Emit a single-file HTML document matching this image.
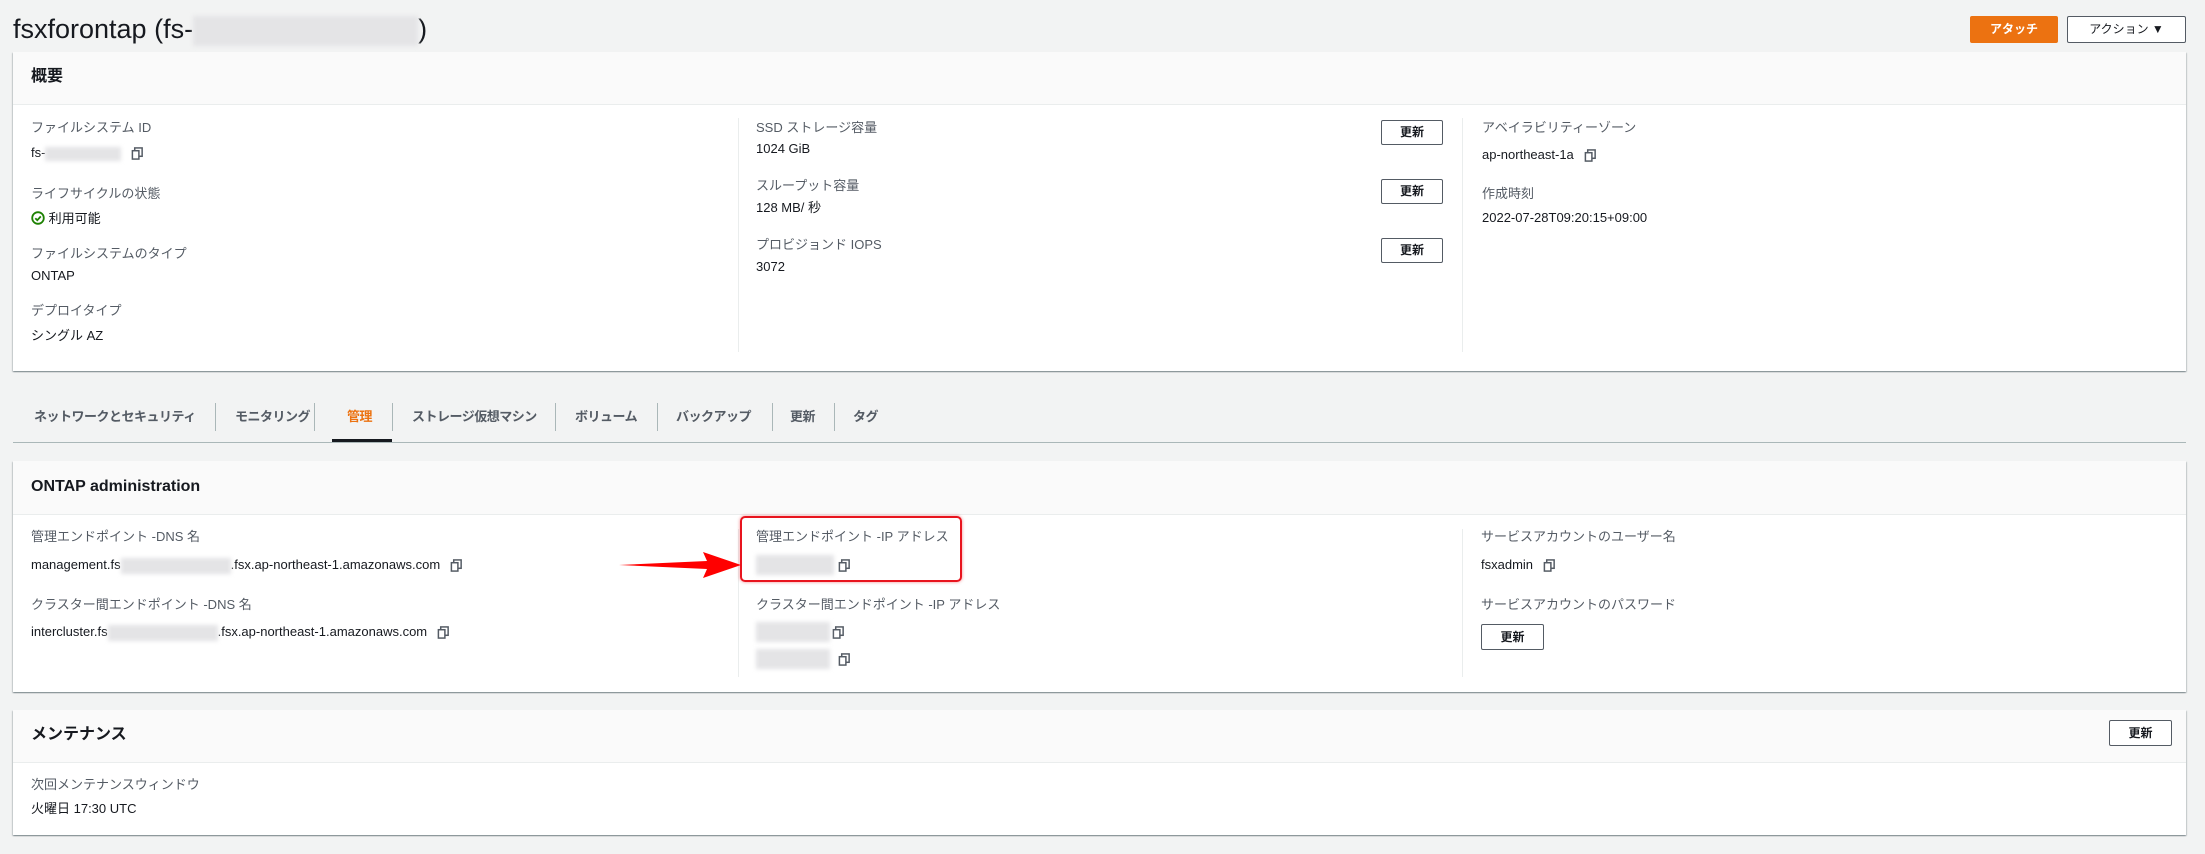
<!DOCTYPE html>
<html><head><meta charset="utf-8"><style>
*{margin:0;padding:0;box-sizing:border-box}
body{width:2205px;height:854px;background:#f2f3f3;font-family:"Liberation Sans","Noto Sans CJK JP",sans-serif;color:#16191f;position:relative;overflow:hidden;font-size:13px}
.a{position:absolute;white-space:nowrap;line-height:18px}
.lbl{color:#545b64}
.card{position:absolute;left:13px;width:2173px;background:#fff;box-shadow:0 1px 1px 0 rgba(0,28,36,.3),1px 1px 1px 0 rgba(0,28,36,.15),-1px 1px 1px 0 rgba(0,28,36,.15)}
.hd{position:absolute;left:0;top:0;width:100%;background:#fafafa;border-bottom:1px solid #eaeded}
.h{font-weight:bold;font-size:16px}
.btn{position:absolute;border:1px solid #545b64;background:#fff;font-size:12px;font-weight:bold;text-align:center;border-radius:2px;color:#545b64}
.vd{position:absolute;width:1px;background:#eaeded}
.blur{display:inline-block;background:#e4e4e6;filter:blur(2px);vertical-align:middle}
.cp{display:inline-block;vertical-align:middle;margin-left:10px}
.tab{position:absolute;top:408px;font-size:13px;font-weight:bold;color:#545b64;line-height:18px;letter-spacing:-0.5px}
.sep{position:absolute;top:403px;width:1px;height:28px;background:#aab7b8}
</style></head><body>
<svg width="0" height="0" style="position:absolute"><defs><symbol id="c" viewBox="0 0 14 14"><rect x="4" y="1" width="8" height="9" fill="none" stroke="#545b64" stroke-width="1.6"/><rect x="1.5" y="4" width="7" height="9" fill="#fff" stroke="#545b64" stroke-width="1.6"/></symbol></defs></svg>

<div class="a" style="left:13px;top:13px;font-size:27px;line-height:32px">fsxforontap (fs-<span class="blur" style="width:225px;height:30px"></span>)</div>
<div class="btn" style="left:1970px;top:16px;width:88px;height:27px;background:#ec7211;border-color:#ec7211;color:#fff;line-height:25px">アタッチ</div>
<div class="btn" style="left:2067px;top:16px;width:119px;height:27px;line-height:25px;font-weight:normal;color:#16191f">アクション ▼</div>

<div class="card" style="top:52px;height:319px">
 <div class="hd" style="height:53px"><div class="a h" style="left:18px;top:16px">概要</div></div>
 <div class="vd" style="left:725px;top:66px;height:234px"></div>
 <div class="vd" style="left:1449px;top:66px;height:234px"></div>
 <div class="a lbl" style="left:18px;top:67px">ファイルシステム ID</div>
 <div class="a" style="left:18px;top:92px">fs-<span class="blur" style="width:76px;height:14px"></span><svg class="cp" width="13" height="13"><use href="#c"/></svg></div>
 <div class="a lbl" style="left:18px;top:133px">ライフサイクルの状態</div>
 <div class="a" style="left:18px;top:158px"><svg width="14" height="14" style="vertical-align:-2px" viewBox="0 0 14 14"><circle cx="7" cy="7" r="5.8" fill="none" stroke="#1d8102" stroke-width="1.8"/><path d="M4.3 7.2l2 2 3.5-3.8" fill="none" stroke="#1d8102" stroke-width="1.8"/></svg> 利用可能</div>
 <div class="a lbl" style="left:18px;top:193px">ファイルシステムのタイプ</div>
 <div class="a" style="left:18px;top:215px">ONTAP</div>
 <div class="a lbl" style="left:18px;top:250px">デプロイタイプ</div>
 <div class="a" style="left:18px;top:275px">シングル AZ</div>

 <div class="a lbl" style="left:743px;top:67px">SSD ストレージ容量</div>
 <div class="a" style="left:743px;top:88px">1024 GiB</div>
 <div class="a lbl" style="left:743px;top:125px">スループット容量</div>
 <div class="a" style="left:743px;top:147px">128 MB/ 秒</div>
 <div class="a lbl" style="left:743px;top:184px">プロビジョンド IOPS</div>
 <div class="a" style="left:743px;top:206px">3072</div>
 <div class="btn" style="left:1368px;top:68px;width:62px;height:25px;line-height:23px;color:#16191f">更新</div>
 <div class="btn" style="left:1368px;top:127px;width:62px;height:25px;line-height:23px;color:#16191f">更新</div>
 <div class="btn" style="left:1368px;top:186px;width:62px;height:25px;line-height:23px;color:#16191f">更新</div>

 <div class="a lbl" style="left:1469px;top:67px">アベイラビリティーゾーン</div>
 <div class="a" style="left:1469px;top:94px">ap-northeast-1a<svg class="cp" width="13" height="13"><use href="#c"/></svg></div>
 <div class="a lbl" style="left:1469px;top:133px">作成時刻</div>
 <div class="a" style="left:1469px;top:157px">2022-07-28T09:20:15+09:00</div>
</div>

<div class="tab" style="left:34px">ネットワークとセキュリティ</div>
<div class="sep" style="left:215px"></div>
<div class="tab" style="left:235px">モニタリング</div>
<div class="sep" style="left:314px"></div>
<div class="tab" style="left:347px;color:#ec7211">管理</div>
<div style="position:absolute;left:332px;top:439px;width:60px;height:3px;background:#16191f"></div>
<div class="sep" style="left:392px"></div>
<div class="tab" style="left:412px">ストレージ仮想マシン</div>
<div class="sep" style="left:555px"></div>
<div class="tab" style="left:575px">ボリューム</div>
<div class="sep" style="left:657px"></div>
<div class="tab" style="left:676px">バックアップ</div>
<div class="sep" style="left:772px"></div>
<div class="tab" style="left:790px">更新</div>
<div class="sep" style="left:834px"></div>
<div class="tab" style="left:853px">タグ</div>
<div style="position:absolute;left:13px;top:442px;width:2173px;height:1px;background:#aab7b8"></div>

<div class="card" style="top:461px;height:231px">
 <div class="hd" style="height:54px"><div class="a h" style="left:18px;top:17px">ONTAP administration</div></div>
 <div class="vd" style="left:725px;top:68px;height:148px"></div>
 <div class="vd" style="left:1449px;top:68px;height:148px"></div>
 <div class="a lbl" style="left:18px;top:67px">管理エンドポイント -DNS 名</div>
 <div class="a" style="left:18px;top:95px">management.fs<span class="blur" style="width:110px;height:16px"></span>.fsx.ap-northeast-1.amazonaws.com<svg class="cp" width="13" height="13"><use href="#c"/></svg></div>
 <div class="a lbl" style="left:18px;top:135px">クラスター間エンドポイント -DNS 名</div>
 <div class="a" style="left:18px;top:162px">intercluster.fs<span class="blur" style="width:110px;height:16px"></span>.fsx.ap-northeast-1.amazonaws.com<svg class="cp" width="13" height="13"><use href="#c"/></svg></div>

 <div class="a lbl" style="left:743px;top:67px">管理エンドポイント -IP アドレス</div>
 <div class="a" style="left:743px;top:94px"><span class="blur" style="width:78px;height:20px"></span><svg class="cp" width="13" height="13" style="margin-left:4px"><use href="#c"/></svg></div>
 <div class="a lbl" style="left:743px;top:135px">クラスター間エンドポイント -IP アドレス</div>
 <div class="a" style="left:743px;top:161px"><span class="blur" style="width:74px;height:20px"></span><svg class="cp" width="13" height="13" style="margin-left:2px"><use href="#c"/></svg></div>
 <div class="a" style="left:743px;top:188px"><span class="blur" style="width:74px;height:20px"></span><svg class="cp" width="13" height="13" style="margin-left:8px"><use href="#c"/></svg></div>

 <div class="a lbl" style="left:1468px;top:67px">サービスアカウントのユーザー名</div>
 <div class="a" style="left:1468px;top:95px">fsxadmin<svg class="cp" width="13" height="13"><use href="#c"/></svg></div>
 <div class="a lbl" style="left:1468px;top:135px">サービスアカウントのパスワード</div>
 <div class="btn" style="left:1468px;top:163px;width:63px;height:26px;line-height:24px;color:#16191f">更新</div>
</div>

<div style="position:absolute;left:740px;top:516px;width:222px;height:66px;border:2px solid #e8141e;border-radius:5px;box-shadow:0 0 3px rgba(232,20,30,.5)"></div>
<svg style="position:absolute;left:615px;top:548px" width="130" height="34" viewBox="0 0 130 34"><path d="M4 17 L92 13 L88 4 L126 17 L88 30 L92 21 Z" fill="#f00"/></svg>

<div class="card" style="top:710px;height:125px">
 <div class="hd" style="height:53px"><div class="a h" style="left:18px;top:16px">メンテナンス</div></div>
 <div class="btn" style="left:2096px;top:10px;width:63px;height:26px;line-height:24px;color:#16191f">更新</div>
 <div class="a lbl" style="left:18px;top:66px">次回メンテナンスウィンドウ</div>
 <div class="a" style="left:18px;top:90px">火曜日 17:30 UTC</div>
</div>
</body></html>
